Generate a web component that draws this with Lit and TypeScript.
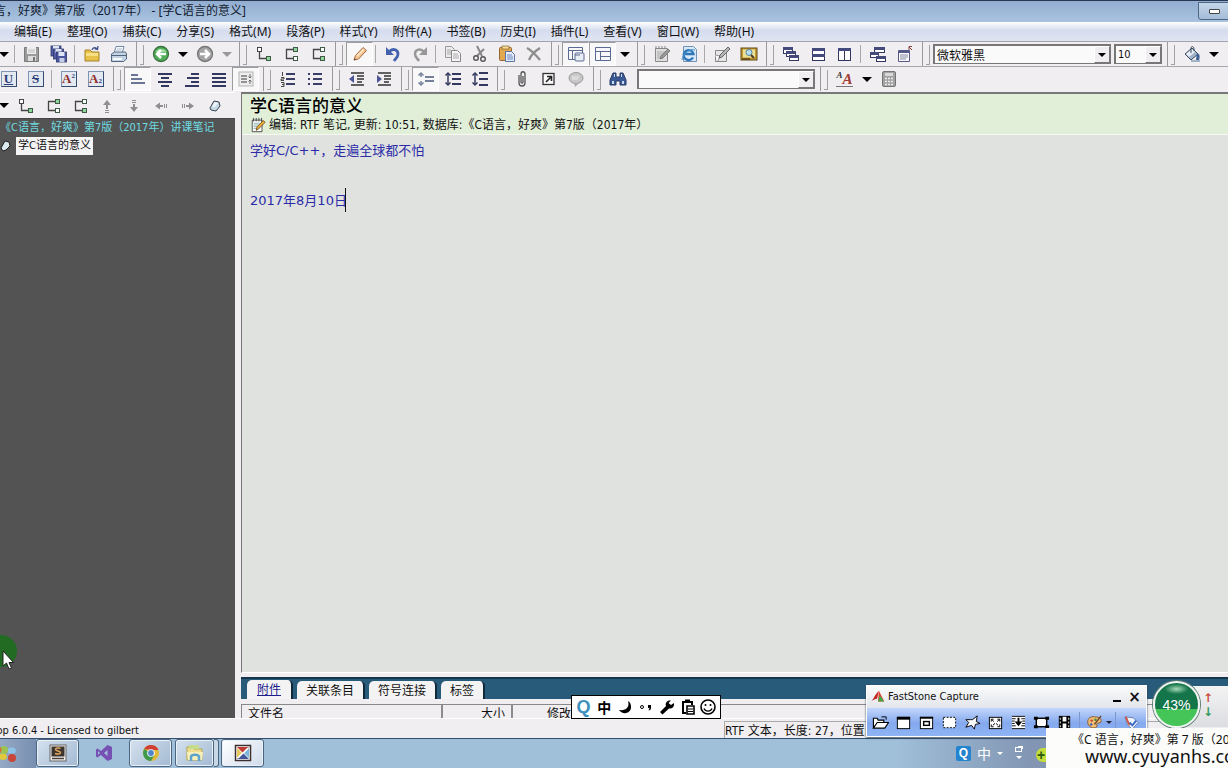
import { LitElement, html, css, svg, nothing, TemplateResult, SVGTemplateResult } from "lit";
import { customElement, property, state } from "lit/decorators.js";
import { classMap } from "lit/directives/class-map.js";

const tree = (a: string, b: string) => svg`
  <path d="M12 4.500H4.500v9H12" fill="none" stroke="#454545" stroke-width="1.300"/>
  <rect x="11.500" y="2.500" width="4" height="4" fill=${a} stroke="#3f5a45"/><rect x="11.500" y="11.500" width="4" height="4" fill=${b} stroke="#3f5a45"/>`;

const lines = (color: string, rows: number[][]) =>
  rows.map(([x, y, w]) => svg`<rect x=${x} y=${y} width=${w} height="2" fill=${color}/>`);

const win = (x: number, y: number, w: number, h: number) => svg`
  <rect x=${x + 0.5} y=${y + 0.5} width=${w - 1} height=${h - 1} fill="#fff" stroke="#33365e"/>
  <rect x=${x} y=${y} width=${w} height="3" fill="#454a7d"/>`;

const floppy = (x: number, y: number, c: string) => svg`
  <rect x=${x} y=${y} width="10" height="10" fill=${c} stroke="#2d3568" stroke-width=".8"/>
  <rect x=${x + 2} y=${y} width="6" height="4" fill="#dfe5f5"/><rect x=${x + 3} y=${y + 6} width="5" height="4" fill="#c5cce6"/>`;

const spacing = (c: string, rows: number[]) => svg`
  <path d="M4 3v12" stroke=${c} stroke-width="1.500" stroke-dasharray=${rows.length > 2 ? "none" : "4 4"}/>
  <path d="M1.500 5.500L4 3l2.500 2.500M1.500 12.500L4 15l2.500-2.500" fill="none" stroke=${c} stroke-width="1.500"/>
  ${lines(c, rows.map((y) => [8, y, 9]))}`;

const ICONS: Record<string, SVGTemplateResult> = {
  save: svg`<path d="M1.500 2.500h14v14h-14z" fill="#9b9b9b" stroke="#7b7b7b"/><rect x="4" y="2" width="9" height="7" fill="#efefef"/><path d="M5 5h7M5 7h7" stroke="#bbb"/><rect x="5" y="11" width="8" height="5" fill="#ddd"/><rect x="10" y="12" width="2" height="4" fill="#777"/>`,
  saveAll: svg`${floppy(1, 1, "#525ca6")}${floppy(3.5, 4, "#525ca6")}${floppy(6.500, 7, "#4a549e")}`,
  folder: svg`<path d="M2 5h5l2 2h7v9H2z" fill="#e8c14a" stroke="#a5842a"/><path d="M3 8h12v3H3z" fill="#f7df86"/><path d="M9 5c1-3 4-3 5-1m1-3l-.5 3.500-3-.8" fill="none" stroke="#44508b" stroke-width="1.300"/>`,
  print: svg`<path d="M6 1.500h8l-2 7H4z" fill="#fff" stroke="#6d88a8"/><path d="M1.500 9l3-2h11l1 2v5l-3 2.500h-12z" fill="#c5d4e4" stroke="#51677f"/><path d="M2 10.500h14" stroke="#51677f"/><path d="M3 13h9v2H3z" fill="#f7fafc"/><path d="M7 4h5M6 6h5" stroke="#a4b6cc"/>`,
  back: svg`<circle cx="9" cy="9" r="7.500" fill="#4fae56" stroke="#3c7040" stroke-width="1.300"/><path d="M3.500 7a6 5 0 0 1 11 0" fill="#a0dba0"/><path d="M14 9H5m4-4L5 9l4 4" fill="none" stroke="#fff" stroke-width="2.500"/>`,
  forward: svg`<circle cx="9" cy="9" r="7.500" fill="#a3a3a3" stroke="#757575" stroke-width="1.300"/><path d="M4 9h9M9 5l4 4-4 4" fill="none" stroke="#fff" stroke-width="2.500"/>`,
  treeChild: svg`<path d="M4.500 6v7.500H12" fill="none" stroke="#454545" stroke-width="1.300"/><rect x="2.500" y="2.500" width="4" height="4" fill="#fff" stroke="#444"/><rect x="11.500" y="11.500" width="4" height="4" fill="#8fd49a" stroke="#3f5a45"/>`,
  treeUp: tree("#8fd49a", "#fff"),
  treeDown: tree("#fff", "#8fd49a"),
  pencil: svg`<path d="M3 15l1.500-4.500L12 2.500l3.500 3L7.500 14z" fill="#f5c891" stroke="#a5653c"/><path d="M6 11l7-7" stroke="#fce8cd" stroke-width="1.500"/><path d="M3 15.500l.8-2.200L5 14.600z" fill="#444"/>`,
  undo: svg`<path d="M5 7c3-4 9-3 9 2 0 3-2 4-4 7" fill="none" stroke="#4562ae" stroke-width="2.800"/><path d="M2 2v8h8z" fill="#4562ae"/>`,
  redo: svg`<path d="M13 7C10 3 4 4 4 9c0 3 2 4 4 7" fill="none" stroke="#979797" stroke-width="2.500"/><path d="M16 2v8H8z" fill="#979797"/>`,
  copy: svg`<path d="M1.500 1.500h6l3 3v8h-9z" fill="#ececec" stroke="#999"/><path d="M7.500 5.500h6l3 3v8h-9z" fill="#f5f5f5" stroke="#888"/><path d="M3 5h4M3 7h4M3 9h4M9 9h5M9 11h6M9 13h6" stroke="#aaa"/>`,
  cut: svg`<path d="M6 1l5 10M13 4L6 11" stroke="#888" stroke-width="2" fill="none"/><circle cx="5" cy="13" r="2.300" fill="none" stroke="#555" stroke-width="1.400"/><circle cx="12" cy="14" r="2.300" fill="none" stroke="#555" stroke-width="1.400"/>`,
  paste: svg`<rect x="1.500" y="2.500" width="12" height="13" rx="1" fill="#e3a850" stroke="#94672a"/><rect x="4" y="1" width="7" height="3" fill="#f5dc95" stroke="#87682e" stroke-width=".7"/><path d="M7.500 6.500h6l3 3v7h-9z" fill="#e6edfa" stroke="#5d73a5"/><path d="M9 10h5M9 12h6M9 14h6" stroke="#6f87bb"/>`,
  remove: svg`<path d="M2 3c4 2 8 6 13 12M15 3C10 6 6 10 4 15" stroke="#8d8d8d" stroke-width="2.200" fill="none"/>`,
  paneFloat: svg`<path d="M1.500 2.500h14v12h-14zM1.500 5.500h14M5.500 5.500v9" fill="none" stroke="#5a6a93"/><rect x="8" y="8" width="9" height="8" rx="1" fill="#e8ecf5" stroke="#5a6a93"/><path d="M8 10h5" stroke="#5a6a93"/>`,
  paneDock: svg`<path d="M1.500 2.500h15v13h-15zM1.500 6.500h15M6.500 6.500v9M6.500 11.500h10" fill="#f8f8fc" stroke="#5a6a93"/>`,
  note: svg`<path d="M2.500 3.500h12v13h-12z" fill="#dedede" stroke="#888"/><path d="M3 1v3M6 1v3M9 1v3M12 1v3" stroke="#888"/><path d="M4 7h8M4 9h7M4 11h6M4 13h6" stroke="#aaa"/><path d="M7 14l1-3 7-7 2 2-7 7z" fill="#999" stroke="#666" stroke-width=".7"/>`,
  browser: svg`<path d="M3.500 1.500h10l3 3v12h-13z" fill="#d9e8f7" stroke="#7291b4"/><path d="M13 12.500a5 5 0 1 1 .5-3.500H5" fill="none" stroke="#2e78b8" stroke-width="2.300"/><path d="M2 15C2 9 11 3 15 5" fill="none" stroke="#4a96ce"/>`,
  edit: svg`<path d="M2.500 5.500h11v11h-11z" fill="#e6e6e6" stroke="#888"/><path d="M2 10l5 1-2 5" fill="#fff" stroke="#999"/><path d="M6 13l1-3 8-8 2 2-8 8z" fill="#b5b5b5" stroke="#666"/>`,
  picture: svg`<rect x="1" y="3" width="16" height="12" fill="#c99b2e" stroke="#5d4a1c"/><rect x="3" y="4.500" width="12" height="8" fill="#e8df98"/><circle cx="9" cy="7.500" r="3" fill="#b8def2" stroke="#5783a0"/><path d="M11 10l3 3" stroke="#4d402c" stroke-width="2"/><path d="M2 14h8" stroke="#574018" stroke-width="1.500"/>`,
  cascade: svg`${win(1, 2, 10, 7)}${win(4, 6, 10, 6)}${win(7, 10, 10, 6)}`,
  tileH: svg`${win(3, 3, 13, 7)}${win(3, 9, 13, 7)}`,
  tileV: svg`${win(2, 3, 7, 13)}${win(8, 3, 7, 13)}`,
  windows: svg`${win(5, 2, 11, 6)}${win(1, 7, 9, 6)}${win(7, 11, 10, 6)}`,
  popOut: svg`<path d="M2.500 5.500h11v11h-11z" fill="#fafafa" stroke="#55598a"/><path d="M2 7h12" stroke="#55598a" stroke-width="2"/><path d="M4 10h8M4 12h8M4 14h6" stroke="#8688a5"/><path d="M13 5V1.500h3M13 2l3 3" fill="none" stroke="#8b4141"/>`,
  bucket: svg`<path d="M2 9l7-6 6 6-7 6z" fill="#9fb3ca" stroke="#3b4c61"/><path d="M3 9l6-5 3 3-6 5z" fill="#e7eef5"/><path d="M8 8V3c0-2 3-2 3 1v2" fill="none" stroke="#3b4c61"/><path d="M14 8c3 1 3 4 2 7h-3z" fill="#3c5f93"/><path d="M8 16h9" stroke="#56779f"/>`,
  alignLeft: svg`${lines("#6b7694", [[2, 4, 7], [2, 8, 11], [2, 12, 14]])}`,
  alignCenter: svg`${lines("#33395e", [[2, 3, 14], [5, 7, 8], [2, 11, 14], [5, 15, 8]])}`,
  alignRight: svg`${lines("#33395e", [[8, 3, 8], [4, 7, 12], [8, 11, 8], [2, 15, 14]])}`,
  justify: svg`${lines("#33395e", [[2, 3, 14], [2, 7, 14], [2, 11, 14], [2, 15, 14]])}`,
  paragraph: svg`<rect x="2" y="2" width="14" height="14" fill="#eee" stroke="#b3b3b3"/><path d="M4 6h6M4 9h6M4 12h6" stroke="#777" stroke-width="1.300"/><path d="M13 4v4m-1.500-1.500L13 8l1.500-1.500M13 14v-4m-1.500 1.500L13 10l1.500 1.500" stroke="#666" fill="none"/>`,
  numbered: svg`${lines("#3a3f68", [[7, 3, 9], [7, 8, 9], [7, 13, 9]])}<path d="M3.500 2v4M2 7.500h3v1.500H2v1.500h3M2 12.500h3v4H2M3 14.500h2" stroke="#444" fill="none"/>`,
  bulleted: svg`${lines("#3a3f68", [[7, 3, 9], [7, 8, 9], [7, 13, 9]])}${lines("#3a3f68", [[2, 3, 2], [2, 8, 2], [2, 13, 2]])}`,
  outdent: svg`<path d="M3 3h13M9 6h7M9 9h7M9 12h5M3 15h13" stroke="#333" stroke-width="1.500"/><path d="M6 5v8L1 9z" fill="#4b5594"/>`,
  indent: svg`<path d="M3 3h13M9 6h7M9 9h7M9 12h5M3 15h13" stroke="#333" stroke-width="1.500"/><path d="M2 5v8l5-4z" fill="#4b5594"/>`,
  space1: spacing("#73809c", [6, 10]),
  space2: spacing("#33395e", [3, 8, 13]),
  space3: spacing("#33395e", [2, 8, 14]),
  clip: svg`<path d="M6 5v8c0 4 6 4 6 0V4c0-3-4-3-4 0v8c0 1.500 2 1.500 2 0V6" fill="none" stroke="#555" stroke-width="1.300"/>`,
  link: svg`<rect x="3" y="3.500" width="11" height="11" fill="#fbfbfb" stroke="#333" stroke-width="1.300"/><path d="M6 12l5-5M7 6.500h4.500V11" fill="none" stroke="#222" stroke-width="1.600"/>`,
  comment: svg`<ellipse cx="9" cy="8" rx="7" ry="5.500" fill="#c8c8c8" stroke="#9a9a9a"/><path d="M7 13l1 4 4-4z" fill="#aaa"/><path d="M5 7h7M5 9h6" stroke="#eee"/>`,
  find: svg`<path d="M4 3h3v4h4V3h3l3 7v5h-6v-4H7v4H1v-5z" fill="#3b5a95" stroke="#273b66"/><path d="M3 11h2v3H3zM13 11h2v3h-2zM5 4h1v3H5zM12 4h1v3h-1z" fill="#c7d8f0"/>`,
  calc: svg`<rect x="2.500" y="1.500" width="13" height="15" rx="1.500" fill="#a2a2a2" stroke="#757575"/><rect x="5" y="3" width="8" height="3" fill="#d9d9d9"/><path d="M5 8.500h9M5 11.500h9M5 14.500h9" stroke="#ececec" stroke-width="1.500" stroke-dasharray="2 1"/>`,
  moveUp: svg`<path d="M9 3l4 5h-3v4H8V8H5z" fill="#8f8f8f"/><path d="M7 13.500h4M7 15.500h4" stroke="#8f8f8f"/>`,
  moveDown: svg`<path d="M9 15l4-5h-3V7H8v3H5z" fill="#8f8f8f"/><path d="M7 3.500h4M7 5.500h4" stroke="#8f8f8f"/>`,
  moveLeft: svg`<path d="M3 9l5-3.500V8h3v2H8v2.500z" fill="#8f8f8f"/><path d="M12.500 7v4M14.500 7v4" stroke="#8f8f8f"/>`,
  moveRight: svg`<path d="M15 9l-5-3.500V8H7v2h3v2.500z" fill="#8f8f8f"/><path d="M3.500 7v4M5.500 7v4" stroke="#8f8f8f"/>`,
  tag: svg`<path d="M4 11l4-7 5 1 1 4-4 5-5-1z" fill="#c7d9e7" stroke="#37434f"/><path d="M6 10l3-5 3 1-3 4z" fill="#eff6fb"/>`,
  corner: svg`<path d="M3.500 0v4l3 4" fill="none" stroke="#666"/>`,
  bead: svg`<path d="M5 11l4-7 4 1 1 4-4 4-3 1z" fill="#dbe8f0" stroke="#222"/>`,
  noteEdit: svg`<path d="M2.500 3.500h11v13h-11z" fill="#fff" stroke="#444"/><path d="M4 1v4M7 1v4M10 1v4M13 1v4" stroke="#444"/><path d="M4 7h7M4 9h6M4 11h5M4 13h4" stroke="#8aa"/><path d="M7 15l1-4 7-7 2 2-7 7z" fill="#f0b23c" stroke="#6d4b1b"/>`,
  start: svg`<path d="M8 4c4-3 8-1 8 2s-5 3-8 2z" fill="#8fc2e8"/><path d="M0 9c4-2 7 0 7 3s-4 4-7 2z" fill="#e0c83c"/><circle cx="12" cy="13" r="4" fill="#c9463a"/><circle cx="4" cy="5" r="4" fill="#9cc455"/><path d="M0 2c2 1 2 4 0 6z" fill="#dc6c36"/>`,
  sublime: svg`<rect x="1" y="1" width="16" height="16" fill="#f0eeea" stroke="#666"/><rect x="2.500" y="2.500" width="13" height="10" fill="#3d3530"/><path d="M11.500 4.500c-2-1-5-.5-5 1s5 1.500 5 3-3 2-5.500 1" fill="none" stroke="#e0a45c" stroke-width="1.500"/><path d="M3 14.500h12" stroke="#4a423b" stroke-width="1.500"/>`,
  studio: svg`<path fill-rule="evenodd" d="M12.500 1L17 3v12l-4.500 2L6 11l-3.500 2.500L1 12.500v-7l1.500-1L6 7zM12.500 6L9 9l3.500 3zM3 7v4l2-2z" fill="#7750b3"/>`,
  chrome: svg`<circle cx="9" cy="9" r="8" fill="#e3b93a"/><path d="M2.100 5A8 8 0 0 1 16.500 6H9z" fill="#cf3f36"/><path d="M2.100 5A8 8 0 0 0 9 17l3.500-6L9 9z" fill="#3f9a50"/><circle cx="9" cy="9" r="3.800" fill="#fff"/><circle cx="9" cy="9" r="2.900" fill="#4f84c9"/>`,
  explorer: svg`<path d="M1 3h6l1 2h8v11H1z" fill="#eddf8e" stroke="#b5a553"/><path d="M3 1h10v4H3z" fill="#c6dc8c"/><path d="M1 8h16l-1 8H2z" fill="#f7f0b8"/><path d="M5 17v-4c0-3 8-3 8 0v4" fill="none" stroke="#5da3cf" stroke-width="2.500"/>`,
  reader: svg`<rect x="1.500" y="1.500" width="15" height="15" fill="#fff" stroke="#3c2f2f" stroke-width="1.500"/><path d="M3 3h12L9 9z" fill="#bf3b34"/><path d="M3 15h12L9 9z" fill="#43549d"/><path d="M3 4v10l5-5z" fill="#e8c85d"/><path d="M15 4v10l-5-5z" fill="#7cb6d8"/><path d="M4 14L14 4" stroke="#fff" stroke-width="1.500"/>`,
  moon: svg`<path d="M12 3c2 6-2 10-9 9 3 5 12 4 12-3 0-3-1-5-3-6z" fill="#000"/>`,
  punct: svg`<circle cx="5" cy="9" r="1.500" fill="none" stroke="#000"/><path d="M11 7h3v3c0 1.500-1 2.500-2.500 2.500l1-2.500H11z" fill="#000"/>`,
  wrench: svg`<path d="M2 14L8 8c-1-3 1-6 5-5.500L10.500 5l2.500 2 3-2c.5 4-2 6-5 5.500l-6.500 6z" fill="#000"/>`,
  clipboard: svg`<path d="M3 3h3V1.500h5V3h3v4h-2V5H5v9h2v2H3z" fill="#000"/><path d="M8 8h7v8H8z" fill="#fff" stroke="#000" stroke-width="1.600"/><path d="M9 11h5M9 13.500h5" stroke="#000"/>`,
  smile: svg`<circle cx="9" cy="9" r="7" fill="#fff" stroke="#000" stroke-width="1.600"/><circle cx="6.500" cy="7" r="1" fill="#000"/><circle cx="11.500" cy="7" r="1" fill="#000"/><path d="M5 10.500c1.500 3.500 6.500 3.500 8 0" fill="none" stroke="#000" stroke-width="1.400"/>`,
  fsLogo: svg`<path d="M1 14C4 12 5 7 10 2L8 11c-2 0-4 1-7 3z" fill="#c02a23"/><path d="M10 2l6 12H9z" fill="#e5382c"/><path d="M11 7l5 7H9z" fill="#46a844"/>`,
  fsOpen: svg`<path d="M1.500 15V4.500h4l1 2h6V9M1.500 15l4-6h12l-4 6z" fill="#fff" stroke="#000" stroke-width="1.200"/><path d="M10 3h5v3" fill="none" stroke="#000"/>`,
  fsWindow: svg`<rect x="2.500" y="3.500" width="13" height="12" fill="#fff" stroke="#000"/><path d="M2 4.500h14" stroke="#000" stroke-width="3"/>`,
  fsObject: svg`<rect x="2.500" y="3.500" width="13" height="12" fill="#fff" stroke="#000"/><path d="M2 4h14" stroke="#000" stroke-width="2"/><rect x="6" y="8" width="6" height="4" fill="#fff" stroke="#000" stroke-width="1.500"/>`,
  fsRect: svg`<rect x="2.500" y="3.500" width="13" height="11" fill="#fff" stroke="#000" stroke-dasharray="2 1.500"/>`,
  fsFree: svg`<path d="M9 6l5-4-1 6 4 2-5 1-1 5-3-4-6 2 3-5-3-3h5z" fill="#fff" stroke="#000"/>`,
  fsFull: svg`<rect x="2.500" y="3.500" width="13" height="12" fill="#fff" stroke="#000"/><path d="M5 6l8 7M13 6l-8 7" stroke="#000" stroke-dasharray="3 3"/><path d="M4.500 8V5.500H7M11 5.500h2.500V8M4.500 11v2.500H7M11 13.500h2.500V11" fill="none" stroke="#000"/>`,
  fsScroll: svg`<rect x="2" y="2" width="14" height="14" fill="#fff"/><path d="M2 2.500h14M2 5h4M12 5h4M2 7.500h3M13 7.500h3M2 10h3M13 10h3M2 15.500h14M2 12.500h4M12 12.500h4" stroke="#000"/><path d="M8 4h2v4h3l-4 5-4-5h3z" fill="#000"/>`,
  fsFixed: svg`<rect x="3.500" y="4.500" width="11" height="9" fill="#fff" stroke="#000" stroke-width="1.500"/><path d="M1 3h4v3H1zM13 3h4v3h-4zM1 12h4v3H1zM13 12h4v3h-4z" fill="#000"/>`,
  fsVideo: svg`<path d="M3 2h12v14H3z" fill="#000"/><path d="M7 3h4v5H7zM7 10h4v5H7zM4 4h1v2H4zM4 8h1v2H4zM4 12h1v2H4zM13 4h1v2h-1zM13 8h1v2h-1zM13 12h1v2h-1z" fill="#fff"/>`,
  fsPalette: svg`<path d="M9 3C4 2 1 6 2 10s6 6 9 4c2-2-1-3 1-4s4 0 4-3-4-4-7-4z" fill="#f0bd74" stroke="#87552a"/><circle cx="6" cy="7" r="1.300" fill="#c43d32"/><circle cx="10" cy="6" r="1.300" fill="#3b8c3e"/><circle cx="5.500" cy="11" r="1.300" fill="#3a5fb5"/><path d="M16 2l-7 9" stroke="#6b4226" stroke-width="1.500"/>`,
  fsSettings: svg`<path d="M3 3l9 1 5 5-6 7-5-4z" fill="#eef3fc" stroke="#6781b5"/><path d="M4 3l4 9" stroke="#d0563e" stroke-width="2"/><path d="M8 9l3 3 4-5" fill="none" stroke="#3b68c0" stroke-width="2"/>`,
};

@customElement("ui-icon")
class UiIcon extends LitElement {
  @property() name = "";
  static styles = css`
    :host { display: block; width: 18px; height: 18px; }
    .glyph { display: block; width: 100%; height: 100%; }
  `;
  render() {
    return html`<svg class="glyph" viewBox="0 0 18 18" aria-hidden="true">${ICONS[this.name] ?? nothing}</svg>`;
  }
}

type Item = string | { id: string; kind?: "drop" | "dim" | "on" | "letter"; text?: string; sub?: string; tone?: string };

const drop = (id: string): Item => ({ id, kind: "drop" });
const on = (id: string): Item => ({ id, kind: "on" });

const ROW_ONE: Item[][] = [
  [drop("new"), "|", "save", "saveAll", "|", "folder", "print"],
  ["back", drop("backList"), "forward", { id: "forwardList", kind: "dim" }],
  ["treeChild", "treeUp", "treeDown"],
  [on("pencil"), "|", "undo", "redo", "|", "copy", "cut", "paste", "remove"],
  [on("paneFloat"), on("paneDock"), { id: "paneList", kind: "drop" }],
  ["note", "browser", "|", "edit", "picture"],
  ["cascade", "tileH", "tileV", "|", "windows", "popOut"],
];

const ROW_TWO: Item[][] = [
  [
    { id: "underline", kind: "letter", text: "U", tone: "under" },
    { id: "strike", kind: "letter", text: "S", tone: "strike" },
    "|",
    { id: "superscript", kind: "letter", text: "A", sub: "2", tone: "sup" },
    { id: "subscript", kind: "letter", text: "A", sub: "2", tone: "sub" },
  ],
  [on("alignLeft"), "alignCenter", "alignRight", "justify", on("paragraph")],
  ["numbered", "bulleted"],
  ["outdent", "indent"],
  [on("space1"), "space2", "space3"],
  ["clip", "link", "comment"],
];

const SIDE_TOOLS: Item[] = [drop("add"), "treeChild", "treeUp", "treeDown", "moveUp", "moveDown", "moveLeft", "moveRight", "tag", "corner"];
const MENUS = ["编辑(E)", "整理(O)", "捕获(C)", "分享(S)", "格式(M)", "段落(P)", "样式(Y)", "附件(A)", "书签(B)", "历史(I)", "插件(L)", "查看(V)", "窗口(W)", "帮助(H)"];
const TABS = ["附件", "关联条目", "符号连接", "标签"];
const CAPTURE = ["fsOpen", "fsWindow", "fsObject", "fsRect", "fsFree", "fsFull", "fsScroll", "fsFixed", "fsVideo"];

@customElement("app-root")
class AppRoot extends LitElement {
  @state() private tab = 0;

  static styles = css`
    :host {
      --sans: "Noto Sans", "Noto Sans CJK SC", sans-serif;
      --ui: "DejaVu Sans Condensed", "Noto Sans CJK SC", sans-serif;
      display: block;
      font: 12px/18px var(--sans);
      color: #111;
    }
    * { box-sizing: border-box; }
    button, select, textarea { font: inherit; color: inherit; margin: 0; padding: 0; border: 0; background: none; border-radius: 0; }
    .app { position: relative; display: flex; flex-direction: column; height: 100vh; overflow: hidden; background: #f0eef0; white-space: nowrap; }

    .titlebar { display: flex; justify-content: space-between; flex: none; height: 22px; border-top: 1px solid #27374f; background: linear-gradient(#92add0, #a9c3df); overflow: hidden; }
    .title { display: flex; justify-content: flex-end; width: 246px; margin: 0; font: 12px/20px var(--sans); color: #13202f; }
    .minimise { display: grid; place-items: center; width: 32px; height: 18px; margin: 1px -2px 0 0; border: 1px solid #4e6787; border-radius: 0 0 0 3px; background: linear-gradient(#c4d5e8, #a4bdd8); }
    .bar { width: 11px; height: 5px; background: #fff; border: 1px solid #444; border-radius: 1px; }

    .menubar { display: flex; flex: none; gap: 15px; height: 20px; padding-left: 14px; background: linear-gradient(#fdfeff, #d5dcee 45%, #e0e5f3); border-bottom: 1px solid #a3a3ae; }
    .menu { line-height: 18px; }

    .toolrow { display: flex; flex: none; height: 25px; overflow: hidden; border-bottom: 1px solid #a9a6ab; }
    .toolrow.second { border-bottom: 0; }
    .lead { margin-left: -5px; }
    .group { display: flex; align-items: center; flex: none; height: 24px; padding-right: 4px; border-right: 1px solid #9b999c; }
    .group.open { border-right: 0; }
    .grip { width: 10px; height: 19px; border-right: 4px solid transparent; }
    .grip::after { content: ""; display: block; width: 3px; height: 19px; margin-left: 3px; border: 1px solid #a3a1a4; border-width: 0 1px 1px 0; }
    .tool { display: grid; place-items: center; flex: none; width: 27px; height: 24px; }
    .tool.on { background: #f8f8f8; border: 1px solid #9c9c9c; border-right-color: #fff; border-bottom-color: #fff; }
    .drop { display: grid; place-items: center; flex: none; width: 17px; height: 24px; }
    .drop::after { content: ""; border: 5px solid transparent; border-top-color: #000; border-bottom: 0; }
    .drop.dim::after { border-top-color: #9a9a9a; }
    .sep { flex: none; width: 1px; height: 18px; margin: 0 3px 0 2px; background: #aaa8ab; }
    .letter { display: block; width: 16px; height: 16px; border: 1px solid #8095b5; border-right-color: #354c72; border-bottom-color: #354c72; background: #e4e9f1; font: bold 13px/13px "Liberation Serif", serif; color: #2c3f77; text-align: center; }
    .letter.under { text-decoration: underline; }
    .letter.strike { text-decoration: line-through; }
    .letter.sup, .letter.sub { color: #8f2e2a; }
    .mini { font-size: 7px; line-height: 7px; color: #2c3f77; }
    .sup .mini { vertical-align: super; }
    .fontstyle { font: italic bold 15px/14px "Liberation Serif", serif; color: #a33a34; border-bottom: 1px solid #777; }
    .fontstyle .mini { font-size: 9px; color: #333; vertical-align: super; }

    .combo { position: relative; flex: none; height: 20px; border: 1px solid #777; border-top-width: 2px; border-left-width: 2px; background: #fbfafb; }
    .combo.font { width: 178px; margin-right: 3px; }
    .combo.size { width: 48px; margin-right: 1px; }
    .combo.search { width: 178px; margin: 0 1px 0 6px; }
    .field { display: block; width: 100%; height: 17px; padding-left: 2px; appearance: none; outline: 0; font: 12px/17px "Noto Sans CJK SC", sans-serif; }
    .field.digits { font: 11px/17px var(--ui); }
    .combo::after { content: ""; position: absolute; right: 4px; top: 7px; border: 4px solid transparent; border-top-color: #000; border-bottom: 0; pointer-events: none; }
    .combo::before { content: ""; position: absolute; box-sizing: border-box; right: 0; top: 0; width: 16px; height: 17px; background: #f0eef0; border: 1px solid #fff; border-right-color: #777; border-bottom-color: #777; pointer-events: none; }

    .work { display: grid; grid-template-columns: 235px minmax(0, 1fr); column-gap: 6px; flex: 1; min-height: 0; }
    .side { display: flex; flex-direction: column; min-height: 0; }
    .sidetools { display: flex; align-items: center; height: 26px; overflow: hidden; flex: none; border-top: 1px solid #fff; }
    .tree { flex: 1; margin: 0; padding: 0; list-style: none; background: #535353; overflow: hidden; border-top: 1px solid #454545; font: 11px/18px var(--ui); }
    .node { display: flex; align-items: center; height: 18px; }
    .root { color: #6fdbe1; text-decoration: none; }
    .bead { margin-left: -4px; flex: none; }
    .picked { margin-left: 2px; padding: 0 2px; background: #f5f4f5; color: #111; text-decoration: none; }

    .main { display: flex; flex-direction: column; min-width: 0; min-height: 0; }
    .doc { position: relative; display: flex; flex-direction: column; flex: 1; min-height: 0; border: solid #777; border-width: 2px 0 0 1px; border-bottom: 1px solid #fff; background: #e0e2df; }
    .dochead { padding: 0 8px; height: 41px; background: #e1efd9; border-bottom: 1px solid #f6faf3; }
    .heading { margin: 0; font: 500 17px/22px "Noto Sans CJK SC", sans-serif; color: #000; }
    .info { display: flex; align-items: center; gap: 3px; margin: 0; height: 18px; font-family: var(--ui); }
    .infoicon { width: 16px; height: 16px; }
    .editor { flex: 1; width: 100%; padding: 3px 8px; resize: none; outline: 0; font: 13px/25px "DejaVu Sans", "Noto Sans CJK SC", sans-serif; color: #2b2ba8; overflow: hidden; }
    .caret { position: absolute; left: 103px; top: 94px; width: 1px; height: 24px; background: #111; }
    .tabs { display: flex; align-items: flex-end; gap: 4px; flex: none; height: 22px; margin-top: 4px; padding-left: 6px; background: #285a7a; border-top: 2px solid #14354c; }
    .tab { height: 18px; padding: 0 9px; border-radius: 5px 5px 0 0; background: #f4f3f4; border-right: 2px solid #10283a; line-height: 19px; }
    .tab.active { height: 19px; padding: 0 10px; color: #1c1c8c; text-decoration: underline; }
    .listwrap { flex: none; height: 14px; margin-top: 5px; overflow: hidden; border: solid #888; border-width: 1px 0 0 1px; }
    .list { width: 100%; border-collapse: collapse; table-layout: fixed; }
    .col { padding: 0 6px; border-right: 2px solid #8d8b8e; font-weight: normal; text-align: right; line-height: 17px; overflow: hidden; }
    .name { width: 200px; text-align: left; padding-left: 6px; }
    .bytes { width: 70px; }
    .date { width: 90px; }
    .fill { width: 580px; }

    .status { display: flex; justify-content: space-between; flex: none; height: 20px; border-top: 1px solid #fff; }
    .product { display: flex; justify-content: flex-end; width: 139px; overflow: hidden; font: 11px/24px var(--ui); }
    .position { width: 504px; margin-top: 2px; border: solid #aaa; border-width: 1px 0 0 1px; line-height: 18px; font-family: var(--ui); }

    .taskbar { display: flex; flex: none; height: 30px; border-top: 1px solid #35506e; background: linear-gradient(90deg, #a0bfd9 73%, #8296b4 84%); }
    .start { display: flex; align-items: center; width: 36px; background: linear-gradient(90deg, #94a9c4, #788fb0); }
    .task { display: grid; place-items: center; width: 43px; height: 28px; }
    .task.boxed { border: 1px solid #4c6480; border-radius: 3px; background: linear-gradient(135deg, #d5e1ee, #a3bad3); box-shadow: inset 0 0 0 1px #e8f0f8; }
    .task.current { background: linear-gradient(135deg, #fff, #d0dbea); }
    .task.stack { width: 39px; margin-left: 3px; }
    .deck { width: 5px; height: 28px; margin: 0 2px 0 0; border: 1px solid #4c6480; border-left: 0; border-radius: 0 3px 3px 0; background: #c9d8e7; }
    .task.vs { width: 50px; }
    .tray { display: flex; align-items: center; gap: 6px; margin-left: auto; margin-right: 182px; color: #fff; font-size: 14px; }
    .imeq { display: grid; place-items: center; width: 15px; height: 15px; background: #2384cf; color: #fff; border-radius: 2px; font: bold 12px/15px "Liberation Sans", sans-serif; }
    .traydrop { border: 3px solid transparent; border-top-color: #fff; border-bottom: 0; }
    .restore { display: grid; gap: 4px; justify-items: center; margin: 0 8px 2px 6px; }
    .panes { width: 7px; height: 5px; border: 1px solid #fff; box-shadow: 2px -2px 0 -1px #fff; }
    .plus { display: grid; place-items: center; width: 10px; height: 14px; margin-top: 2px; border-radius: 7px 0 0 7px; background: #c3dd3a; color: #2b5a12; font: bold 14px/14px "Liberation Sans", sans-serif; }

    .spot { position: absolute; left: -15px; bottom: 101px; width: 32px; height: 32px; border-radius: 50%; background: #226b22; }
    .pointer { position: absolute; left: 2px; bottom: 98px; width: 12px; height: 20px; }

    .ime { position: absolute; left: 571px; bottom: 49px; display: flex; align-items: center; justify-content: space-around; width: 150px; height: 24px; padding: 0 1px; background: #fff; border: 1px solid #000; }
    .imetool { display: grid; place-items: center; width: 18px; height: 18px; font: bold 14px/18px "Noto Sans CJK SC", sans-serif; color: #000; }
    .imelogo { font: bold 18px/18px "Liberation Sans", sans-serif; color: #3d90bd; }

    .capture { position: absolute; right: 81px; bottom: 31px; width: 281px; height: 52px; border: 1px solid #fff; box-shadow: 0 1px 2px #345; background: #8fb2f0; }
    .caphead { display: flex; align-items: center; gap: 2px; height: 22px; padding: 0 4px 0 3px; background: linear-gradient(#fafbfc, #e2e5ea); font: 11px/22px "DejaVu Sans Condensed", sans-serif; }
    .caplogo { width: 16px; height: 16px; }
    .capname { flex: 1; }
    .capbtn { width: 15px; height: 18px; font: bold 15px/18px "DejaVu Sans", sans-serif; }
    .dash { display: block; width: 8px; height: 2px; margin: 7px 3px 0; background: #000; }
    .captools { display: flex; align-items: center; height: 28px; padding-left: 2px; background: linear-gradient(#c2d6fb, #84a9ee 55%, #8fb4f5); }
    .captool { display: grid; place-items: center; width: 23px; height: 28px; }
    .captool ui-icon { width: 17px; height: 17px; }
    .capsep { width: 1px; height: 20px; margin: 0 3px; background: #7c99cf; }
    .capdrop { border: 3px solid transparent; border-top-color: #223; border-bottom: 0; }

    .meter { position: absolute; right: 0; bottom: 41px; width: 52px; height: 41px; background: linear-gradient(#f3f3f4, #dcdde0); }
    .arrows { display: grid; justify-items: center; width: 14px; margin-left: 25px; padding-top: 5px; font: bold 12px/14px "DejaVu Sans", sans-serif; }
    .up { color: #cc5447; }
    .down { color: #2f9a5a; }
    .ball { position: absolute; right: 28px; bottom: 40px; display: grid; place-items: center; width: 47px; height: 47px; border: 2px solid #f0f4f2; border-radius: 50%; box-shadow: 0 0 0 1px #5e7c70; background: radial-gradient(ellipse 12px 5px at 50% 6px, #a8dcb8, transparent), linear-gradient(#15754a 60%, #45c558 60%); color: #fff; font: 14px/42px "Liberation Sans", sans-serif; }
    .watermark { position: absolute; right: 0; bottom: 0; width: 182px; height: 40px; padding-left: 26px; overflow: hidden; background: #fcfcfb; color: #111; }
    .course { margin: 0; padding-top: 4px; font: 12px/16px var(--sans); }
    .site { display: block; padding-left: 13px; font: 18px/16px var(--sans); color: #111; text-decoration: none; }
  `;

  private item(i: Item): TemplateResult {
    if (i === "|") return html`<span class="sep"></span>`;
    if (typeof i === "string") return html`<button class="tool" aria-label=${i}><ui-icon name=${i}></ui-icon></button>`;
    if (i.kind === "drop" || i.kind === "dim")
      return html`<button class=${classMap({ drop: true, dim: i.kind === "dim" })} aria-label=${i.id}></button>`;
    if (i.kind === "letter")
      return html`<button class="tool" aria-label=${i.id}><span class="letter ${i.tone}">${i.text}${i.sub ? html`<span class="mini">${i.sub}</span>` : nothing}</span></button>`;
    return html`<button class="tool on" aria-label=${i.id} aria-pressed="true"><ui-icon name=${i.id}></ui-icon></button>`;
  }

  private group(items: Item[], first: boolean) {
    return html`<div class=${classMap({ group: true, lead: first })}>${first ? nothing : html`<span class="grip"></span>`}${items.map((i) => this.item(i))}</div>`;
  }

  render() {
    return html`<div class="app">
      <header class="titlebar">
        <h1 class="title">言，好爽》第7版（2017年） - [学C语言的意义]</h1>
        <button class="minimise" aria-label="最小化"><span class="bar"></span></button>
      </header>
      <nav class="menubar">${MENUS.map((m) => html`<button class="menu">${m}</button>`)}</nav>
      <div class="toolrow">
        ${ROW_ONE.map((g, n) => this.group(g, n === 0))}
        <div class="group"><span class="grip"></span>
          <span class="combo font"><select class="field" aria-label="字体"><option>微软雅黑</option></select></span>
          <span class="combo size"><select class="field digits" aria-label="字号"><option>10</option></select></span>
        </div>
        <div class="group open"><span class="grip"></span>${this.item("bucket")}${this.item(drop("colours"))}</div>
      </div>
      <div class="toolrow second">
        ${ROW_TWO.map((g, n) => this.group(g, n === 0))}
        <div class="group"><span class="grip"></span>${this.item("find")}
          <span class="combo search"><select class="field" aria-label="查找"><option></option></select></span>
        </div>
        <div class="group open"><span class="grip"></span>
          <button class="tool" aria-label="字体样式"><span class="fontstyle"><span class="mini">A</span>A</span></button>
          ${this.item(drop("styles"))}${this.item("calc")}
        </div>
      </div>
      <div class="work">
        <aside class="side">
          <div class="sidetools"><div class="group open lead">${SIDE_TOOLS.map((i) => this.item(i))}</div></div>
          <ul class="tree">
            <li class="node"><a class="root" href="#book">《C语言，好爽》第7版（2017年）讲课笔记</a></li>
            <li class="node"><ui-icon class="bead" name="bead"></ui-icon><a class="picked" href="#note">学C语言的意义</a></li>
          </ul>
        </aside>
        <main class="main">
          <section class="doc">
            <div class="dochead">
              <h2 class="heading">学C语言的意义</h2>
              <p class="info"><ui-icon class="infoicon" name="noteEdit"></ui-icon>编辑: RTF 笔记, 更新: 10:51, 数据库:《C语言，好爽》第7版（2017年）</p>
            </div>
            <textarea class="editor" aria-label="笔记内容" spellcheck="false" .value=${"学好C/C++，走遍全球都不怕\n\n2017年8月10日"}></textarea>
            <span class="caret"></span>
          </section>
          <div class="tabs" role="tablist">
            ${TABS.map((t, n) => html`<button role="tab" aria-selected=${n === this.tab} class=${classMap({ tab: true, active: n === this.tab })} @click=${() => (this.tab = n)}>${t}</button>`)}
          </div>
          <div class="listwrap"><table class="list"><thead><tr>
            <th class="col name">文件名</th><th class="col bytes">大小</th><th class="col date">修改时间</th><th class="col fill"></th><th class="col"></th>
          </tr></thead></table></div>
        </main>
      </div>
      <footer class="status">
        <span class="product">Desktop 6.0.4 - Licensed to gilbert</span>
        <span class="position">RTF 文本，长度: 27，位置: 27</span>
      </footer>
      <div class="taskbar">
        <button class="start" aria-label="开始"><ui-icon name="start"></ui-icon></button>
        <button class="task boxed" aria-label="Sublime Text"><ui-icon name="sublime"></ui-icon></button>
        <button class="task vs" aria-label="Visual Studio"><ui-icon name="studio"></ui-icon></button>
        <button class="task boxed" aria-label="Chrome"><ui-icon name="chrome"></ui-icon></button>
        <button class="task boxed stack" aria-label="资源管理器"><ui-icon name="explorer"></ui-icon></button><span class="deck"></span>
        <button class="task boxed current" aria-label="CyberArticle"><ui-icon name="reader"></ui-icon></button>
        <div class="tray"><span class="imeq">Q</span><span>中</span><span class="traydrop"></span>
          <span class="restore"><span class="panes"></span><span class="traydrop"></span></span><span class="plus">+</span></div>
      </div>

      <span class="spot"></span>
      <svg class="pointer" viewBox="0 0 12 20"><path d="M1 1v15l3.500-3 2.500 6 2.500-1-2.500-5.500h4.500z" fill="#fff" stroke="#222"/></svg>

      <div class="ime">
        <button class="imetool imelogo">Q</button><button class="imetool">中</button>
        ${["moon", "punct", "wrench", "clipboard", "smile"].map((n) => html`<button class="imetool" aria-label=${n}><ui-icon name=${n}></ui-icon></button>`)}
      </div>

      <div class="meter"><div class="arrows"><span class="up">↑</span><span class="down">↓</span></div></div>
      <section class="capture">
        <div class="caphead"><ui-icon class="caplogo" name="fsLogo"></ui-icon><span class="capname">FastStone Capture</span>
          <button class="capbtn" aria-label="最小化"><span class="dash"></span></button><button class="capbtn" aria-label="关闭">×</button></div>
        <div class="captools">
          ${CAPTURE.map((n) => html`<button class="captool" aria-label=${n}><ui-icon name=${n}></ui-icon></button>`)}
          <span class="capsep"></span><button class="captool" aria-label="palette"><ui-icon name="fsPalette"></ui-icon></button><span class="capdrop"></span>
          <span class="capsep"></span><button class="captool" aria-label="settings"><ui-icon name="fsSettings"></ui-icon></button>
        </div>
      </section>
      <div class="ball">43%</div>
      <div class="watermark"><p class="course">《C 语言，好爽》第 7 版（2017年）</p><a class="site" href="#site">www.cyuyanhs.com</a></div>
    </div>`;
  }
}
